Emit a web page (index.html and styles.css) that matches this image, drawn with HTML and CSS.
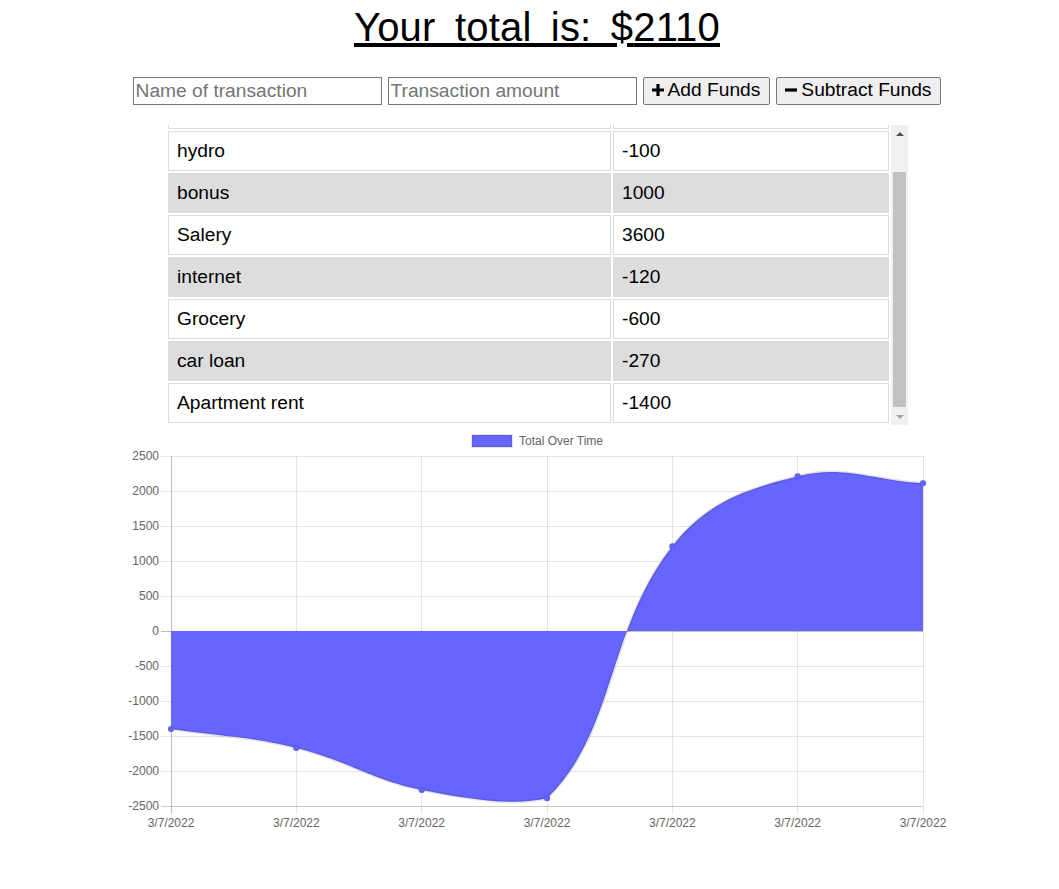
FILE: index.html
```html
<!DOCTYPE html>
<html lang="en">
<head>
    <meta charset="UTF-8">
    <title>Budget Tracker</title>
    <link rel="stylesheet" href="styles.css">
</head>
<body>

<h1 class="total">Your total is: $<span id="total">2110</span></h1>

<form class="entry">
    <input type="text" id="t-name" placeholder="Name of transaction">
    <input type="text" id="t-amount" placeholder="Transaction amount">
    <button type="button" class="btn" id="add-btn">
        <svg class="icon" viewBox="0 0 12 12"><path d="M4.4 0h3.2v4.4H12v3.2H7.6V12H4.4V7.6H0V4.4h4.4z"/></svg>Add Funds
    </button>
    <button type="button" class="btn" id="sub-btn">
        <svg class="icon" viewBox="0 0 12 12"><path d="M0 4.4h12v3.2H0z"/></svg>Subtract Funds
    </button>
</form>

<div class="table-box">
    <div class="table-view">
        <table class="list">
            <thead>
                <tr><th>Transaction</th><th>Amount</th></tr>
            </thead>
            <tbody id="tbody">
                <tr><td>hydro</td><td>-100</td></tr>
                <tr><td>bonus</td><td>1000</td></tr>
                <tr><td>Salery</td><td>3600</td></tr>
                <tr><td>internet</td><td>-120</td></tr>
                <tr><td>Grocery</td><td>-600</td></tr>
                <tr><td>car loan</td><td>-270</td></tr>
                <tr><td>Apartment rent</td><td>-1400</td></tr>
            </tbody>
        </table>
    </div>
    <!--假滚动条,已经滚到底部-->
    <div class="scrollbar">
        <div class="sb-btn up"></div>
        <div class="sb-track"><div class="sb-thumb"></div></div>
        <div class="sb-btn down"></div>
    </div>
</div>

<svg class="chart" width="830" height="405" viewBox="0 0 830 405">
    <!--图例-->
    <rect x="350" y="10" width="40" height="12" fill="#6666ff" stroke="rgba(0,0,0,0.1)" stroke-width="2"/>
    <text class="label" x="397" y="20">Total Over Time</text>

    <!--横向网格-->
    <g stroke="rgba(0,0,0,0.1)" stroke-width="1">
        <line x1="39" y1="31.5" x2="801" y2="31.5"/>
        <line x1="39" y1="66.5" x2="801" y2="66.5"/>
        <line x1="39" y1="101.5" x2="801" y2="101.5"/>
        <line x1="39" y1="136.5" x2="801" y2="136.5"/>
        <line x1="39" y1="171.5" x2="801" y2="171.5"/>
        <line x1="39" y1="241.5" x2="801" y2="241.5"/>
        <line x1="39" y1="276.5" x2="801" y2="276.5"/>
        <line x1="39" y1="311.5" x2="801" y2="311.5"/>
        <line x1="39" y1="346.5" x2="801" y2="346.5"/>
    </g>
    <!--纵向网格-->
    <g stroke="rgba(0,0,0,0.1)" stroke-width="1">
        <line x1="174.5" y1="31" x2="174.5" y2="389"/>
        <line x1="299.5" y1="31" x2="299.5" y2="389"/>
        <line x1="425.5" y1="31" x2="425.5" y2="389"/>
        <line x1="550.5" y1="31" x2="550.5" y2="389"/>
        <line x1="675.5" y1="31" x2="675.5" y2="389"/>
        <line x1="801.5" y1="31" x2="801.5" y2="389"/>
    </g>
    <g stroke="rgba(0,0,0,0.25)" stroke-width="1">
        <line x1="39" y1="206.5" x2="801" y2="206.5"/>
        <line x1="49.5" y1="31" x2="49.5" y2="389"/>
    </g>
    <line x1="39" y1="381.5" x2="801" y2="381.5" stroke="rgba(0,0,0,0.2)" stroke-width="1"/>

    <!--数据-->
    <path fill="#6666ff" d="M49,304 C99.13,311.56 125.25,310.98 174.33,322.9 C225.52,335.34 248.26,354.56 299.67,364.9 C348.53,374.72 394.07,381 425,373.3 C494.33,305.92 483.93,206.6 550.33,121.3 C584.2,77.8 622.18,64.74 675.67,51.3 C722.45,39.54 750.87,55.5 801,58.3 L801,206 L49,206 Z"/>
    <path fill="none" stroke="rgba(0,0,0,0.1)" stroke-width="3" d="M49,304 C99.13,311.56 125.25,310.98 174.33,322.9 C225.52,335.34 248.26,354.56 299.67,364.9 C348.53,374.72 394.07,381 425,373.3 C494.33,305.92 483.93,206.6 550.33,121.3 C584.2,77.8 622.18,64.74 675.67,51.3 C722.45,39.54 750.87,55.5 801,58.3"/>
    <g fill="#6262f8" stroke="rgba(0,0,0,0.08)" stroke-width="1">
        <circle cx="49" cy="304" r="3"/>
        <circle cx="174.33" cy="322.9" r="3"/>
        <circle cx="299.67" cy="364.9" r="3"/>
        <circle cx="425" cy="373.3" r="3"/>
        <circle cx="550.33" cy="121.3" r="3"/>
        <circle cx="675.67" cy="51.3" r="3"/>
        <circle cx="801" cy="58.3" r="3"/>
    </g>

    <!--Y轴-->
    <g class="label y-label">
        <text x="37" y="35">2500</text>
        <text x="37" y="70">2000</text>
        <text x="37" y="105">1500</text>
        <text x="37" y="140">1000</text>
        <text x="37" y="175">500</text>
        <text x="37" y="210">0</text>
        <text x="37" y="245">-500</text>
        <text x="37" y="280">-1000</text>
        <text x="37" y="315">-1500</text>
        <text x="37" y="350">-2000</text>
        <text x="37" y="385">-2500</text>
    </g>
    <!--X轴-->
    <g class="label x-label">
        <text x="49" y="402">3/7/2022</text>
        <text x="174.33" y="402">3/7/2022</text>
        <text x="299.67" y="402">3/7/2022</text>
        <text x="425" y="402">3/7/2022</text>
        <text x="550.33" y="402">3/7/2022</text>
        <text x="675.67" y="402">3/7/2022</text>
        <text x="801" y="402">3/7/2022</text>
    </g>
</svg>

</body>
</html>
```

FILE: styles.css
```css
* {
    margin: 0;
    padding: 0;
}

body {
    padding-left: 15px;
    font-family: "Liberation Sans", Arial, sans-serif;
    font-size: 19.2px;
    color: #000;
    background: #fff;
}

.total {
    margin-top: 5px;
    font-size: 40px;
    font-weight: normal;
    word-spacing: 8px;
    letter-spacing: 0.2px;
    text-align: center;
    text-decoration: underline;
}

.entry {
    display: flex;
    justify-content: center;
    gap: 6px;
    margin-top: 27px;
}
.entry input {
    box-sizing: border-box;
    width: 249px;
    height: 28px;
    padding: 1px 2px;
    border: 1px solid #767676;
    font-family: inherit;
    font-size: 19.2px;
    color: #000;
}
.entry input::placeholder {
    color: #757575;
}
.entry .btn {
    box-sizing: border-box;
    height: 28px;
    padding: 0 9px 2px 8px;
    border: 1px solid #767676;
    border-radius: 2px;
    background: #efefef;
    font-family: inherit;
    font-size: 19.2px;
    color: #000;
}
.entry .btn .icon {
    width: 12px;
    height: 12px;
    margin-right: 4px;
    vertical-align: 0;
}

.table-box {
    display: flex;
    width: 742px;
    height: 300px;
    margin: 20px auto 0;
}
.table-view {
    flex: 1;
    display: flex;
    flex-direction: column;
    justify-content: flex-end;
    overflow: hidden;
}
.list {
    width: 100%;
    border-spacing: 2px;
}
.list th,
.list td {
    box-sizing: border-box;
    height: 40px;
    padding: 0 8px;
    border: 1px solid #ddd;
    font-weight: normal;
    text-align: left;
}
.list th:first-child,
.list td:first-child {
    width: 443px;
}
.list tbody tr:nth-child(even) td {
    background: #ddd;
}

.scrollbar {
    display: flex;
    flex-direction: column;
    width: 17px;
    background: #f1f1f1;
}
.sb-btn {
    height: 17px;
    display: flex;
    align-items: center;
    justify-content: center;
}
.sb-btn::after {
    content: "";
    border-left: 4px solid transparent;
    border-right: 4px solid transparent;
}
.sb-btn.up::after {
    border-bottom: 4px solid #505050;
}
.sb-btn.down::after {
    border-top: 4px solid #a3a3a3;
}
.sb-track {
    flex: 1;
    display: flex;
    flex-direction: column;
    justify-content: flex-end;
    padding: 0 2px 1px;
}
.sb-thumb {
    height: 235px;
    background: #c1c1c1;
}

.chart {
    display: block;
    margin: 0 auto;
}
.chart .label {
    font-family: "Liberation Sans", Arial, sans-serif;
    font-size: 12px;
    fill: #666;
}
.chart .y-label {
    text-anchor: end;
}
.chart .x-label {
    text-anchor: middle;
}
```
